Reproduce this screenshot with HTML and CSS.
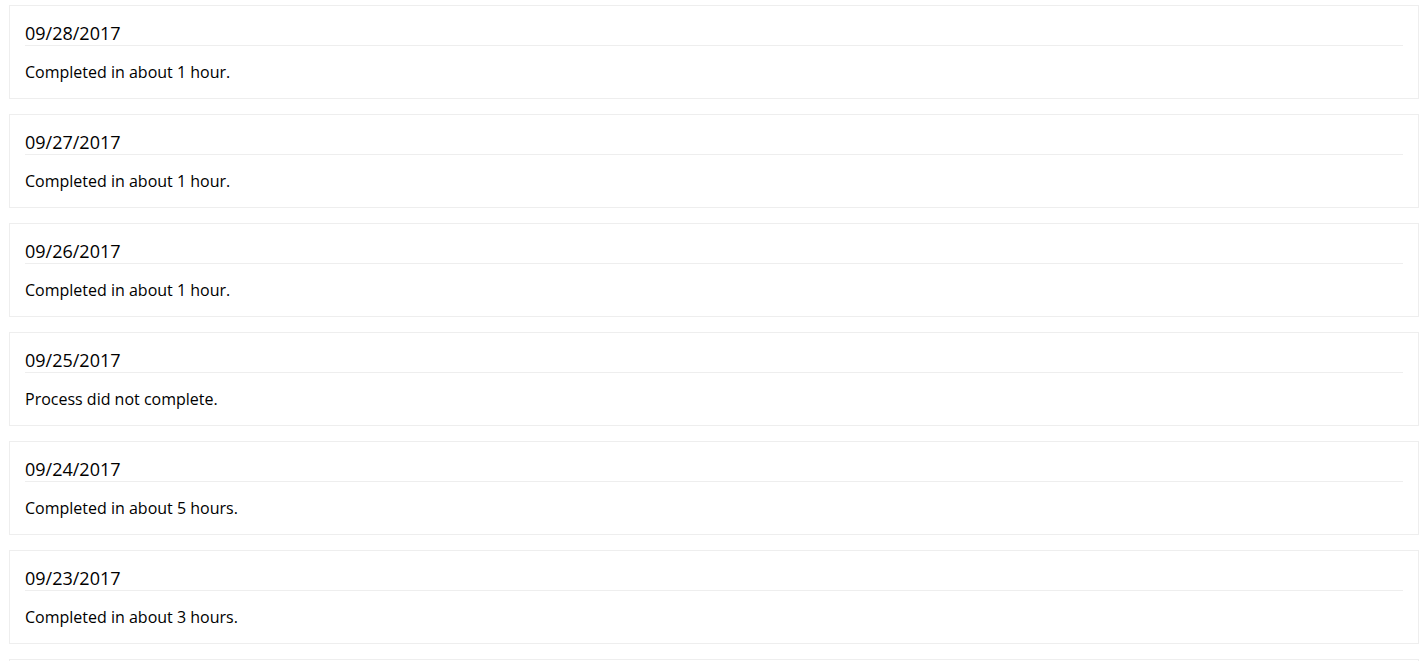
FILE: index.html
```html
<!DOCTYPE html>
<html lang="en">
<head>
  <meta charset="UTF-8">
  <meta name="viewport" content="width=device-width, initial-scale=1">
  <title>Run History</title>
  <link rel="stylesheet" href="styles.css">
</head>
<body>

  <div class="history">
    <div class="run">
      <div class="run-date">09/28/2017</div>
      <div class="run-status">Completed in about 1 hour.</div>
    </div>
    <div class="run">
      <div class="run-date">09/27/2017</div>
      <div class="run-status">Completed in about 1 hour.</div>
    </div>
    <div class="run">
      <div class="run-date">09/26/2017</div>
      <div class="run-status">Completed in about 1 hour.</div>
    </div>
    <div class="run">
      <div class="run-date">09/25/2017</div>
      <div class="run-status">Process did not complete.</div>
    </div>
    <div class="run">
      <div class="run-date">09/24/2017</div>
      <div class="run-status">Completed in about 5 hours.</div>
    </div>
    <div class="run">
      <div class="run-date">09/23/2017</div>
      <div class="run-status">Completed in about 3 hours.</div>
    </div>
    <div class="run">
      <div class="run-date">09/22/2017</div>
      <div class="run-status">Completed in about 2 hours.</div>
    </div>
  </div>

</body>
</html>
```

FILE: styles.css
```css
* {
  box-sizing: border-box;
}

body {
  margin: 0;
  font-family: 'Open Sans', 'Noto Sans', sans-serif;
  color: #000;
  background: #fff;
  overflow: hidden;
}

/* List of daily runs */
.history {
  display: flex;
  flex-direction: column;
  gap: 15px;
  padding: 5px 6px 0 9px;
}

.run {
  border: 1px solid #eee;
  padding: 17px 15px 15px;
}

.run-date {
  font-size: 18px;
  line-height: 20px;
  padding-bottom: 2px;
  border-bottom: 1px solid #eee;
}

.run-status {
  margin-top: 15px;
  font-size: 16px;
  line-height: 22px;
}
```
